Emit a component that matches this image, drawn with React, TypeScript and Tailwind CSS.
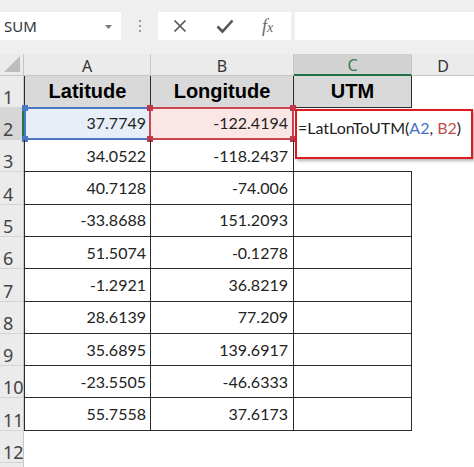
import React from 'react';

const ROWS: [string, string][] = [
  ['37.7749', '-122.4194'],
  ['34.0522', '-118.2437'],
  ['40.7128', '-74.006'],
  ['-33.8688', '151.2093'],
  ['51.5074', '-0.1278'],
  ['-1.2921', '36.8219'],
  ['28.6139', '77.209'],
  ['35.6895', '139.6917'],
  ['-23.5505', '-46.6333'],
  ['55.7558', '37.6173'],
];

const ui = { fontFamily: '"Noto Sans", "Open Sans", sans-serif' };
const cellFont = { fontFamily: 'Lato, "Noto Sans", sans-serif' };
const bold = { fontFamily: '"Liberation Sans", Arial, sans-serif' };

function RowHead({ n, active }: { n: number; active?: boolean }) {
  return (
    <div
      className={`w-[24px] shrink-0 h-full flex items-end pb-[1px] pl-[3px] text-[18px] leading-none text-[#444] border-b border-[#d4d4d4] ${
        active ? 'bg-[#d6d6d6] border-r-2 border-r-[#217346]' : 'bg-[#ebebeb] border-r border-r-[#c6c6c6]'
      }`}
      style={ui}
    >
      {n}
    </div>
  );
}

function Square({ className }: { className: string }) {
  return <span className={`absolute w-[6px] h-[6px] ${className}`} />;
}

export default function App() {
  return (
    <div className="w-[474px] h-[467px] bg-white overflow-hidden relative select-none">
      {/* Toolbar: name box + formula bar */}
      <div className="h-[54px] bg-[#efefef] flex items-start pt-[12px]">
        <div className="w-[121px] h-[28px] bg-white flex items-center justify-between pl-[4px] pr-[8px]">
          <span className="text-[15px] text-[#333]" style={ui}>SUM</span>
          <svg width="9" height="6" viewBox="0 0 9 6" className="mt-[1px]">
            <path d="M1 1 L4.5 5 L8 1 Z" fill="#777" />
          </svg>
        </div>
        <div className="w-[37px] h-[28px] flex flex-col items-center justify-center gap-[3px]">
          <span className="w-[2px] h-[2px] bg-[#9a9a9a]" />
          <span className="w-[2px] h-[2px] bg-[#9a9a9a]" />
          <span className="w-[2px] h-[2px] bg-[#9a9a9a]" />
        </div>
        <div className="w-[133px] h-[28px] bg-white flex items-center pl-[14px] gap-[28px]">
          <svg width="16" height="16" viewBox="0 0 16 16">
            <path d="M2.5 2.5 L13.5 13.5 M13.5 2.5 L2.5 13.5" stroke="#555" strokeWidth="1.7" fill="none" />
          </svg>
          <svg width="18" height="16" viewBox="0 0 18 16">
            <path d="M1.5 8.5 L6.5 13.5 L16.5 2.5" stroke="#555" strokeWidth="2.6" fill="none" />
          </svg>
          <span className="text-[18px] italic text-[#666] leading-none" style={{ fontFamily: '"Liberation Serif", serif' }}>
            f<span className="text-[14px]">x</span>
          </span>
        </div>
        <div className="ml-[4px] flex-1 h-[28px] bg-white" />
      </div>

      {/* Column headers */}
      <div className="h-[21.5px] flex bg-[#ebebeb] text-[16px] leading-none" style={ui}>
        <div className="w-[24px] shrink-0 relative border-r border-[#c6c6c6] border-b border-b-[#c6c6c6]">
          <svg width="16" height="16" viewBox="0 0 16 16" className="absolute left-[4px] top-[2px]">
            <path d="M16 0 L16 16 L0 16 Z" fill="#bdbdbd" />
          </svg>
        </div>
        <div className="w-[127px] shrink-0 flex items-end justify-center pb-[1px] border-r border-[#c6c6c6] border-b border-b-[#c6c6c6] text-[#333]">A</div>
        <div className="w-[143px] shrink-0 flex items-end justify-center pb-[1px] border-r border-[#c6c6c6] border-b border-b-[#c6c6c6] text-[#333]">B</div>
        <div className="w-[118px] shrink-0 flex items-end justify-center pb-[1px] bg-[#d2d2d2] border-r border-[#c6c6c6] border-b-2 border-b-[#217346] text-[#3d7a52]">C</div>
        <div className="flex-1 flex items-end justify-center pb-[1px] border-b border-b-[#c6c6c6] text-[#333]">D</div>
      </div>

      {/* Row 1: titles */}
      <div className="h-[32.3px] flex">
        <RowHead n={1} />
        <div className="w-[127px] shrink-0 bg-[#d9d9d9] border-x border-b border-[#2b2b2b] flex items-center justify-center text-[20px] font-bold text-black" style={bold}>Latitude</div>
        <div className="w-[143px] shrink-0 bg-[#d9d9d9] border-r border-b border-[#2b2b2b] flex items-center justify-center text-[20px] font-bold text-black" style={bold}>Longitude</div>
        <div className="w-[118px] shrink-0 bg-[#d9d9d9] border-r border-b border-[#2b2b2b] flex items-center justify-center text-[20px] font-bold text-black" style={bold}>UTM</div>
        <div className="flex-1" />
      </div>

      {/* Data rows */}
      {ROWS.map(([lat, lon], i) => {
        const n = i + 2;
        const first = n === 2;
        return (
          <div key={n} className="h-[32.3px] flex text-[16px] text-[#222]" style={cellFont}>
            <RowHead n={n} active={first} />
            <div
              className={`relative w-[127px] shrink-0 border-x border-b border-[#2b2b2b] flex items-center justify-end pr-[4px] ${
                first ? 'bg-[#e8eef8]' : ''
              }`}
            >
              {first && <span className="absolute -inset-[1px] border-2 border-[#4a78c2]" />}
              {first && <Square className="-left-[3px] -top-[3px] bg-[#4a78c2]" />}
              {first && <Square className="-left-[3px] -bottom-[3px] bg-[#4a78c2]" />}
              <span className="relative">{lat}</span>
            </div>
            <div
              className={`relative w-[143px] shrink-0 border-r border-b border-[#2b2b2b] flex items-center justify-end pr-[5px] ${
                first ? 'bg-[#fbe6e6]' : ''
              }`}
            >
              {first && <span className="absolute -inset-[1px] -left-[2px] border-2 border-[#c8464f]" />}
              {first && <Square className="-left-[4px] -top-[3px] bg-[#c0394a]" />}
              {first && <Square className="-left-[4px] -bottom-[3px] bg-[#c0394a]" />}
              {first && <Square className="-right-[3px] -top-[3px] bg-[#c0394a]" />}
              {first && <Square className="-right-[3px] -bottom-[3px] bg-[#c0394a]" />}
              <span className="relative">{lon}</span>
            </div>
            <div
              className={`w-[118px] shrink-0 ${
                n === 2 ? '' : n === 3 ? 'border-b border-[#2b2b2b]' : 'border-r border-b border-[#2b2b2b]'
              }`}
            />
            <div className="flex-1" />
          </div>
        );
      })}

      {/* Row 12 */}
      <div className="h-[32.3px] flex">
        <RowHead n={12} />
        <div className="flex-1" />
      </div>
      <div className="h-[20px] flex">
        <div className="w-[24px] bg-[#ebebeb] border-r border-[#c6c6c6]" />
      </div>

      {/* In-cell formula editor */}
      <div
        className="absolute left-[295px] top-[109px] w-[178px] h-[50px] bg-white border-2 border-[#e0191f] shadow-[2px_2px_3px_rgba(0,0,0,0.3)] pl-[1px] pt-[5px] text-[16px] text-[#222] whitespace-nowrap"
        style={cellFont}
      >
        =LatLonToUTM(<span className="text-[#4472c4]">A2</span>, <span className="text-[#c0504d]">B2</span>)
      </div>
    </div>
  );
}
